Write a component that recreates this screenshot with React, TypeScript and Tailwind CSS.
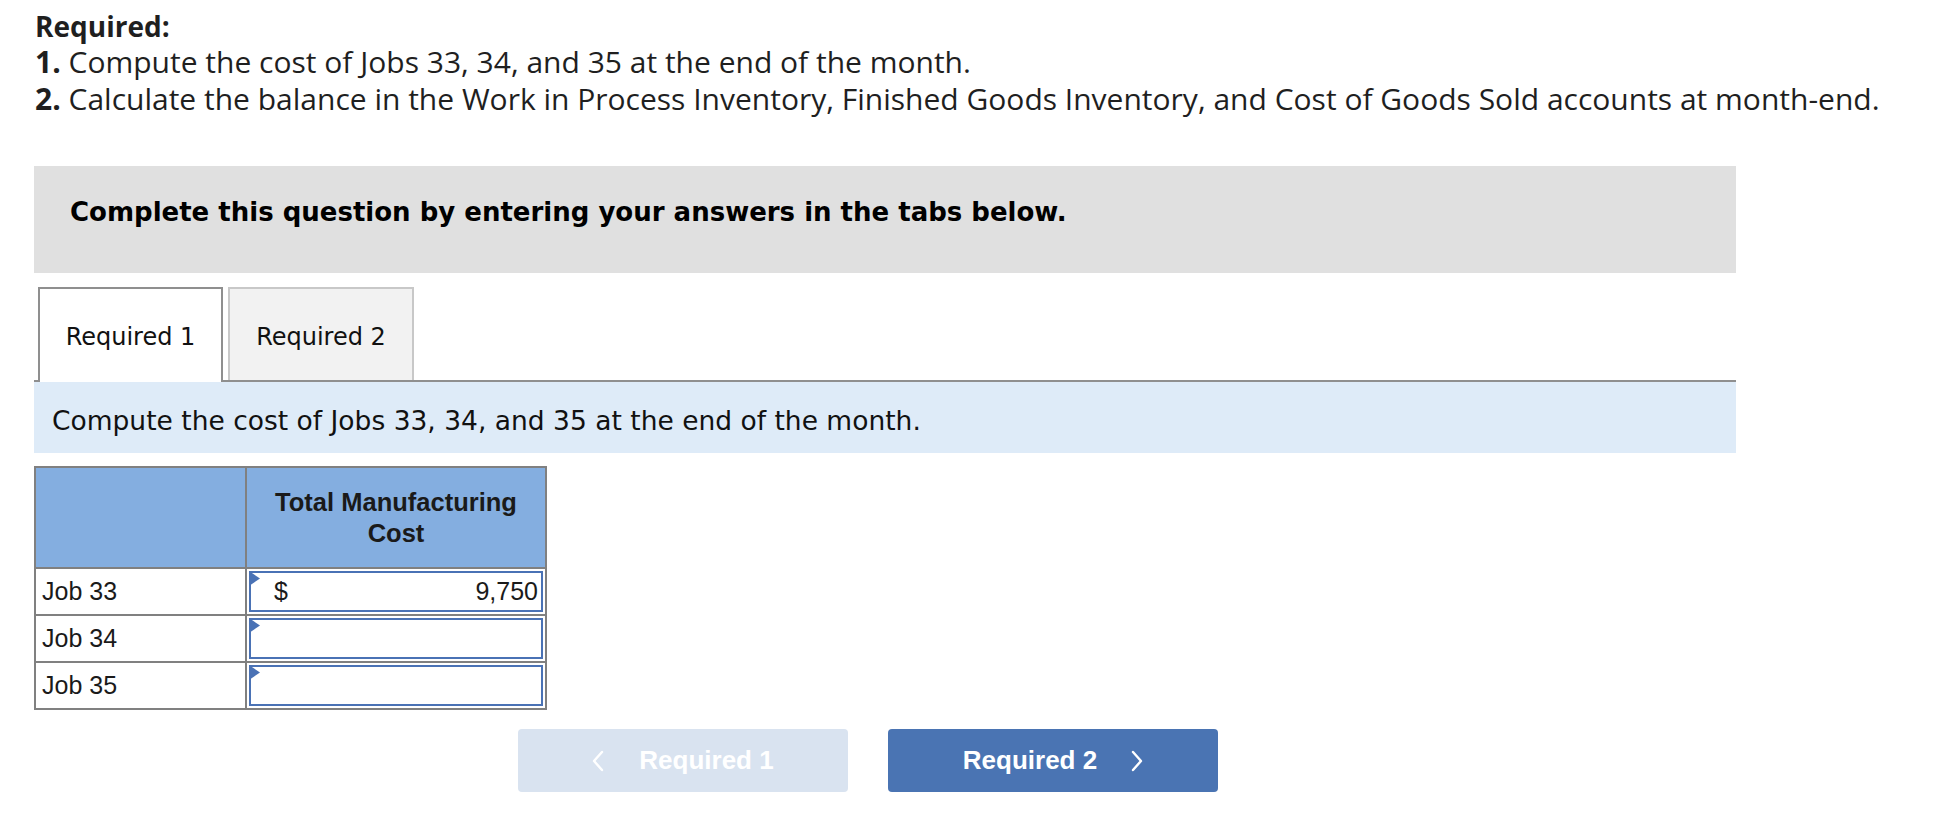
const jobs = [
  { name: "Job 33", value: "9,750" },
  { name: "Job 34", value: "" },
  { name: "Job 35", value: "" },
];

function Flag() {
  return (
    <svg
      className="absolute -left-[2px] -top-[2px]"
      width="11"
      height="15"
      viewBox="0 0 11 15"
    >
      <polygon points="0,0 11,7.5 0,15" fill="#4a72b5" />
    </svg>
  );
}

function Chevron({ dir }: { dir: "left" | "right" }) {
  return (
    <svg
      width="12"
      height="22"
      viewBox="0 0 12 22"
      fill="none"
      stroke="currentColor"
      strokeWidth="2.4"
      strokeLinecap="round"
      strokeLinejoin="round"
    >
      <polyline points={dir === "left" ? "10,2 2,11 10,20" : "2,2 10,11 2,20"} />
    </svg>
  );
}

export default function App() {
  return (
    <div className="h-[825px] w-[1937px] overflow-hidden bg-white text-[#1f1f1f]">
      <div className="pl-[35px] pt-[8px] font-['Open_Sans',sans-serif]">
        <p className="text-[28px] font-bold leading-[36px]">Required:</p>
        <p className="text-[30px] leading-[36.5px]">
          <span className="font-bold">1.</span> Compute the cost of Jobs 33, 34, and 35 at the end of the month.
        </p>
        <p className="text-[30px] leading-[36.5px]">
          <span className="font-bold">2.</span> Calculate the balance in the Work in Process Inventory, Finished Goods
          Inventory, and Cost of Goods Sold accounts at month-end.
        </p>
      </div>

      <div className="ml-[34px] mt-[49px] w-[1702px]">
        <div className="h-[107px] bg-[#e0e0e0] pl-[36px] pt-[31px] font-['DejaVu_Sans',sans-serif] text-[26px] font-bold leading-[30px] text-black">
          Complete this question by entering your answers in the tabs below.
        </div>

        <div className="mt-[14px] flex items-start gap-[5px] border-b-2 border-[#8f8f8f] pl-[4px] font-['DejaVu_Sans',sans-serif] text-[24px] leading-[28px] text-[#111]">
          <div className="-mb-[2px] flex h-[95px] w-[185px] items-center justify-center border-2 border-b-0 border-[#8f8f8f] bg-white pt-[3px]">
            Required 1
          </div>
          <div className="flex h-[93px] w-[186px] items-center justify-center border-2 border-b-0 border-[#c8c8c8] bg-[#f2f2f2] pt-[4px]">
            Required 2
          </div>
        </div>

        <div className="flex h-[71px] items-center bg-[#deebf8] pl-[18px] pt-[6px] font-['DejaVu_Sans',sans-serif] text-[26.5px] leading-[30px] text-[#111]">
          Compute the cost of Jobs 33, 34, and 35 at the end of the month.
        </div>

        <div className="mt-[13px] grid w-[513px] grid-cols-[209px_298px] gap-[2px] border-2 border-[#808080] bg-[#808080] font-['Liberation_Sans',Arial,sans-serif] text-[25px] text-[#1a1a1a]">
          <div className="h-[99px] bg-[#84aee0]" />
          <div className="flex h-[99px] items-center justify-center bg-[#84aee0] text-center text-[25.5px] font-bold leading-[31px]">
            Total Manufacturing
            <br />
            Cost
          </div>
          {jobs.map((job) => (
            <>
              <div key={job.name} className="flex h-[45px] items-center bg-white pl-[6px]">
                {job.name}
              </div>
              <div key={job.name + "-v"} className="h-[45px] bg-white p-[2px]">
                <div className="relative flex h-full items-center justify-between border-2 border-[#4a72b5] pl-[23px] pr-[3px]">
                  <Flag />
                  <span>{job.value ? "$" : ""}</span>
                  <span>{job.value}</span>
                </div>
              </div>
            </>
          ))}
        </div>

        <div className="ml-[484px] mt-[19px] flex gap-[40px] font-['Liberation_Sans',Arial,sans-serif] text-[26px] font-bold text-white">
          <button
            type="button"
            className="flex h-[63px] w-[330px] items-center justify-center gap-[35px] rounded-[4px] bg-[#d9e3f0]"
          >
            <Chevron dir="left" />
            <span>Required 1</span>
          </button>
          <button
            type="button"
            className="flex h-[63px] w-[330px] items-center justify-center gap-[34px] rounded-[4px] bg-[#4a74b3]"
          >
            <span>Required 2</span>
            <Chevron dir="right" />
          </button>
        </div>
      </div>
    </div>
  );
}
